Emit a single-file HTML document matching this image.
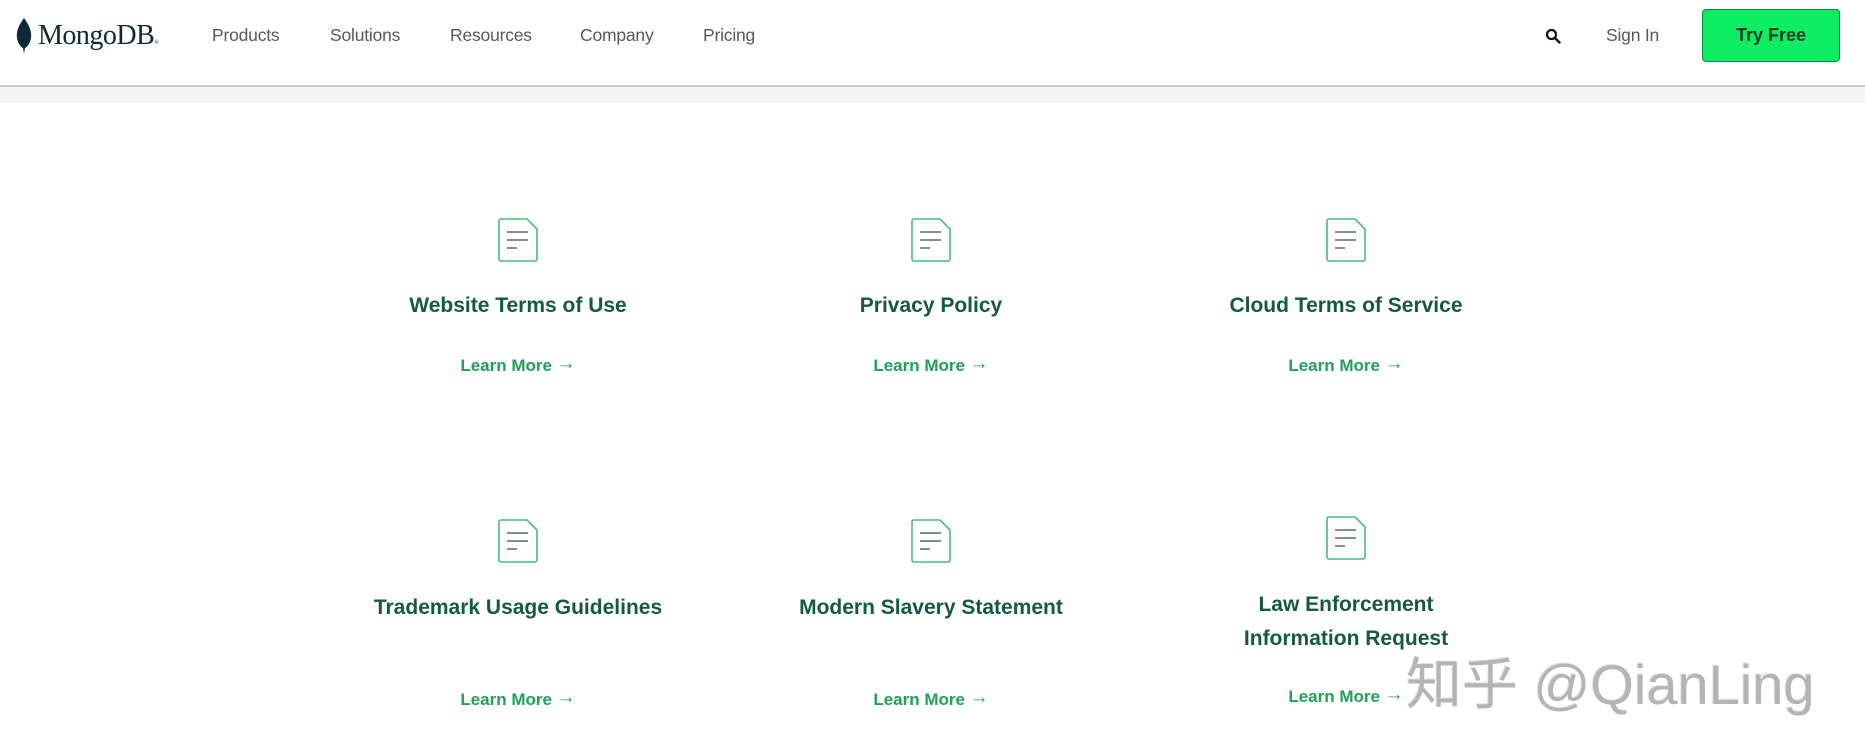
<!DOCTYPE html>
<html><head><meta charset="utf-8"><style>
*{margin:0;padding:0;box-sizing:border-box}
body{width:1865px;height:755px;background:#fff;position:relative;overflow:hidden;font-family:"Liberation Sans",Arial,sans-serif}
.a{position:absolute;white-space:nowrap}
.nav{font-size:17.5px;color:#55595c;top:25px;letter-spacing:-0.2px}
.band{position:absolute;left:0;top:85px;width:1865px;height:18px;background:#f4f5f4;border-top:2px solid #c6c9c8}
.col{position:absolute;width:420px;margin-left:-210px;text-align:center}
.t{font-weight:bold;font-size:21px;color:#145a3e;line-height:34px}
.lm{font-weight:bold;font-size:17px;color:#1fa258;line-height:22px}
.lm span{font-size:19px;position:relative;top:-2px}
.ic{position:absolute;left:50%;margin-left:-20px;width:40px;height:44px}
</style></head><body>
<svg class="a" style="left:14px;top:17px" width="20" height="38" viewBox="0 0 20 38"><path d="M10 1C5 8 2 14 3 21c1 6 4 9 6 10l1 6 1-6c2-1 5-4 6-10C18 14 15 8 10 1z" fill="#0d2a35"/></svg>
<div class="a" style="left:38px;top:20px;font-family:'Liberation Serif',serif;font-size:28px;color:#0d2a35;letter-spacing:-0.5px">MongoDB<span style="font-size:6px">®</span></div>
<div class="a nav" style="left:212px">Products</div>
<div class="a nav" style="left:330px">Solutions</div>
<div class="a nav" style="left:450px">Resources</div>
<div class="a nav" style="left:580px">Company</div>
<div class="a nav" style="left:703px">Pricing</div>
<svg class="a" style="left:1545px;top:28px" width="16" height="16" viewBox="0 0 16 16"><circle cx="6.5" cy="6.5" r="4.5" fill="none" stroke="#111" stroke-width="2.2"/><path d="M10 10l4.5 4.5" stroke="#111" stroke-width="2.4" stroke-linecap="round"/></svg>
<div class="a nav" style="left:1606px">Sign In</div>
<div class="a" style="left:1702px;top:9px;width:138px;height:53px;background:#0ded62;border:1px solid #0d8a45;border-radius:4px;text-align:center;line-height:51px;font-weight:bold;font-size:18px;color:#0e3a26">Try Free</div>
<div class="band"></div>

<svg width="0" height="0" style="position:absolute"><defs><g id="doc"><path d="M3 1h26l10 10v30a2 2 0 0 1-2 2H3a2 2 0 0 1-2-2V3a2 2 0 0 1 2-2z" fill="none" stroke="#4cbb82" stroke-width="1.6"/><path d="M9 14h21M9 22h21M9 30h10" stroke="#5b6b64" stroke-width="1.6"/></g></defs></svg>

<div class="col" style="left:518px;top:218px"><svg class="ic" viewBox="0 0 40 44"><use href="#doc"/></svg><div class="t" style="position:absolute;width:100%;top:71px">Website Terms of Use</div><div class="lm" style="position:absolute;width:100%;top:137px">Learn More <span>→</span></div></div>
<div class="col" style="left:931px;top:218px"><svg class="ic" viewBox="0 0 40 44"><use href="#doc"/></svg><div class="t" style="position:absolute;width:100%;top:71px">Privacy Policy</div><div class="lm" style="position:absolute;width:100%;top:137px">Learn More <span>→</span></div></div>
<div class="col" style="left:1346px;top:218px"><svg class="ic" viewBox="0 0 40 44"><use href="#doc"/></svg><div class="t" style="position:absolute;width:100%;top:71px">Cloud Terms of Service</div><div class="lm" style="position:absolute;width:100%;top:137px">Learn More <span>→</span></div></div>

<div class="col" style="left:518px;top:519px"><svg class="ic" viewBox="0 0 40 44"><use href="#doc"/></svg><div class="t" style="position:absolute;width:100%;top:72px">Trademark Usage Guidelines</div><div class="lm" style="position:absolute;width:100%;top:170px">Learn More <span>→</span></div></div>
<div class="col" style="left:931px;top:519px"><svg class="ic" viewBox="0 0 40 44"><use href="#doc"/></svg><div class="t" style="position:absolute;width:100%;top:72px">Modern Slavery Statement</div><div class="lm" style="position:absolute;width:100%;top:170px">Learn More <span>→</span></div></div>
<div class="col" style="left:1346px;top:516px"><svg class="ic" viewBox="0 0 40 44"><use href="#doc"/></svg><div class="t" style="position:absolute;width:100%;top:72px">Law Enforcement<br>Information Request</div><div class="lm" style="position:absolute;width:100%;top:170px">Learn More <span>→</span></div></div>

<div class="a" style="left:1406px;top:640px;font-family:'Liberation Sans','Noto Sans CJK SC',sans-serif;font-size:56px;color:#b4b4b4;text-shadow:2px 2px 0 #fff,-1px -1px 0 #e0e0e0">知乎 @QianLing</div>
</body></html>
